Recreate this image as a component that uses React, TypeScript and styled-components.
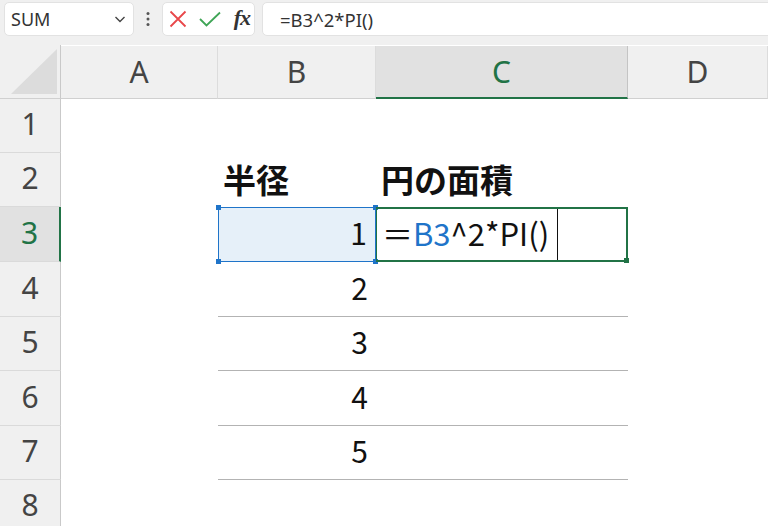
import React from 'react';
import styled, { createGlobalStyle, css } from 'styled-components';

const GlobalStyle = createGlobalStyle`
    html, body {
        margin: 0;
        padding: 0;
        background: #ffffff;
        overflow: hidden;
    }
    body {
        font-family: "Noto Sans", "Noto Sans CJK JP", sans-serif;
    }
`;

const CELL_FONT = `"Noto Sans CJK JP", "Noto Sans", sans-serif`;
const UI_FONT = `"Noto Sans", "Liberation Sans", sans-serif`;

const GREEN = '#217346';
const BLUE = '#1f74c9';

const Window = styled.div`
    width: 768px;
    height: 526px;
    display: flex;
    flex-direction: column;
    overflow: hidden;
    background: #ffffff;
`;

// 数式バー
const Toolbar = styled.div`
    height: 45px;
    flex-shrink: 0;
    display: flex;
    align-items: flex-start;
    padding: 2px 0 0 4px;
    box-sizing: border-box;
    background: #f0f0f0;
`;

const Panel = styled.div`
    height: 34px;
    box-sizing: border-box;
    background: #ffffff;
    border: 1px solid #e2e2e2;
    border-radius: 5px;
    display: flex;
    align-items: center;
`;

const NameBox = styled(Panel)`
    width: 130px;
    padding: 0 6px 0 6px;
    justify-content: space-between;
    font-family: ${UI_FONT};
    font-size: 18px;
    color: #333333;
`;

const Dots = styled.div`
    width: 28px;
    height: 34px;
    display: flex;
    align-items: center;
    justify-content: center;
`;

const ButtonGroup = styled(Panel)`
    width: 93px;
    padding: 0 4px 0 6px;
    justify-content: space-between;
`;

const Fx = styled.span`
    font-family: "Liberation Serif", "DejaVu Serif", serif;
    font-style: italic;
    font-weight: bold;
    font-size: 22px;
    color: #333333;
    margin-top: -3px;
    letter-spacing: -1px;
`;

const FormulaBox = styled(Panel)`
    flex: 1;
    margin-left: 7px;
    margin-right: -12px;
    padding-left: 17px;
    font-family: ${UI_FONT};
    font-size: 18.5px;
    color: #333333;
`;

// シート
const Sheet = styled.div`
    display: grid;
    grid-template-columns: 61px 157px 158px 252px 1fr;
    grid-template-rows: 54px 54px 54px 55px 55px 54px 55px 54px 54px;
`;

const Corner = styled.div`
    background: #f0f0f0;
    border-right: 1px solid #c9c9c9;
    border-bottom: 1px solid #d0d0d0;
    box-sizing: border-box;
    display: flex;
    align-items: flex-end;
    justify-content: flex-end;
    padding: 0 3px 4px 0;
`;

const ColHead = styled.div<{ $selected?: boolean }>`
    box-sizing: border-box;
    background: ${(p) => (p.$selected ? '#e1e1e1' : '#f0f0f0')};
    border-right: 1px solid ${(p) => (p.$selected ? '#c4c4c4' : '#dcdcdc')};
    border-bottom: ${(p) => (p.$selected ? `2px solid ${GREEN}` : '1px solid #d0d0d0')};
    margin-top: 1px;
    display: flex;
    align-items: center;
    justify-content: center;
    font-family: ${UI_FONT};
    font-size: 30px;
    color: ${(p) => (p.$selected ? GREEN : '#444444')};
    padding-bottom: ${(p) => (p.$selected ? '0' : '1px')};
`;

const RowHead = styled.div<{ $selected?: boolean }>`
    box-sizing: border-box;
    background: ${(p) => (p.$selected ? '#e1e1e1' : '#f0f0f0')};
    border-right: ${(p) => (p.$selected ? `2px solid ${GREEN}` : '1px solid #c9c9c9')};
    border-bottom: 1px solid #dadada;
    display: flex;
    align-items: center;
    justify-content: center;
    font-family: ${UI_FONT};
    font-size: 30px;
    color: ${(p) => (p.$selected ? GREEN : '#444444')};
    padding-bottom: 4px;
`;

const Cell = styled.div<{ $right?: boolean; $bold?: boolean; $ruled?: boolean }>`
    box-sizing: border-box;
    display: flex;
    align-items: center;
    justify-content: ${(p) => (p.$right ? 'flex-end' : 'flex-start')};
    padding: ${(p) => (p.$right ? '0 8px 5px 0' : '0 0 2px 5px')};
    font-family: ${CELL_FONT};
    font-size: ${(p) => (p.$bold ? '33px' : '30px')};
    font-weight: ${(p) => (p.$bold ? 700 : 400)};
    color: #111111;
    border-bottom: 1px solid ${(p) => (p.$ruled ? '#b3b3b3' : 'transparent')};
    white-space: nowrap;
`;

const selectedBox = css`
    position: relative;
    box-sizing: border-box;
    display: flex;
    align-items: center;
    font-family: ${CELL_FONT};
    font-size: 31px;
    color: #111111;
`;

const RefCell = styled.div`
    ${selectedBox};
    justify-content: flex-end;
    padding: 0 8px 5px 0;
    font-size: 30px;
    background: #e6f0f9;
    border: 1px solid ${BLUE};
`;

const EditCell = styled.div`
    ${selectedBox};
    padding: 0 0 4px 5px;
    border: 2px solid ${GREEN};
    border-left-width: 1px;
`;

const Handle = styled.span<{ $color: string; $v: 'top' | 'bottom'; $h: 'left' | 'right' }>`
    position: absolute;
    width: 5px;
    height: 5px;
    background: ${(p) => p.$color};
    ${(p) => p.$v}: -3px;
    ${(p) => p.$h}: -3px;
`;

const Ref = styled.span`
    color: ${BLUE};
`;

const Caret = styled.span`
    align-self: stretch;
    width: 1px;
    margin: 0 0 -4px 8px;
    background: #111111;
`;

const Chevron = () => (
    <svg width="14" height="14" viewBox="0 0 14 14">
        <path d="M2.5 5 L7 9.5 L11.5 5" fill="none" stroke="#444" strokeWidth="1.4" />
    </svg>
);

const VDots = () => (
    <svg width="4" height="16" viewBox="0 0 4 16">
        <circle cx="2" cy="2.5" r="1.5" fill="#555" />
        <circle cx="2" cy="8" r="1.5" fill="#555" />
        <circle cx="2" cy="13.5" r="1.5" fill="#555" />
    </svg>
);

const Cancel = () => (
    <svg width="18" height="18" viewBox="0 0 18 18">
        <path d="M1.5 1.5 L16.5 16.5 M16.5 1.5 L1.5 16.5" stroke="#e8474a" strokeWidth="1.8" fill="none" />
    </svg>
);

const Enter = () => (
    <svg width="22" height="16" viewBox="0 0 22 16">
        <path d="M1 8 L7.5 14.5 L21 1.5" stroke="#3fa556" strokeWidth="1.8" fill="none" />
    </svg>
);

const CornerMark = () => (
    <svg width="46" height="45" viewBox="0 0 46 45">
        <polygon points="46,0 46,45 0,45" fill="#dcdcdc" />
    </svg>
);

type Row = {
    n: number;
    b?: string;
    c?: string;
    bold?: boolean;
    ruled?: boolean;
    active?: boolean;
};

const rows: Row[] = [
    { n: 1 },
    { n: 2, b: '半径', c: '円の面積', bold: true },
    { n: 3, b: '1', active: true },
    { n: 4, b: '2', ruled: true },
    { n: 5, b: '3', ruled: true },
    { n: 6, b: '4', ruled: true },
    { n: 7, b: '5', ruled: true },
    { n: 8 },
];

const columns = ['A', 'B', 'C', 'D'];

const App: React.FC = () => {
    return (
        <>
            <GlobalStyle />
            <Window>
                <Toolbar>
                    <NameBox>
                        <span>SUM</span>
                        <Chevron />
                    </NameBox>
                    <Dots>
                        <VDots />
                    </Dots>
                    <ButtonGroup>
                        <Cancel />
                        <Enter />
                        <Fx>fx</Fx>
                    </ButtonGroup>
                    <FormulaBox>=B3^2*PI()</FormulaBox>
                </Toolbar>
                <Sheet>
                    <Corner>
                        <CornerMark />
                    </Corner>
                    {columns.map((col) => (
                        <ColHead key={col} $selected={col === 'C'}>
                            {col}
                        </ColHead>
                    ))}
                    {rows.map((row) => (
                        <React.Fragment key={row.n}>
                            <RowHead $selected={row.active}>{row.n}</RowHead>
                            <Cell />
                            {row.active ? (
                                <>
                                    <RefCell>
                                        {row.b}
                                        <Handle $color={BLUE} $v="top" $h="left" />
                                        <Handle $color={BLUE} $v="top" $h="right" />
                                        <Handle $color={BLUE} $v="bottom" $h="left" />
                                        <Handle $color={BLUE} $v="bottom" $h="right" />
                                    </RefCell>
                                    <EditCell>
                                        ＝<Ref>B3</Ref>^2*PI()
                                        <Caret />
                                        <Handle $color={GREEN} $v="bottom" $h="right" />
                                    </EditCell>
                                </>
                            ) : (
                                <>
                                    <Cell $right={!row.bold} $bold={row.bold} $ruled={row.ruled}>
                                        {row.b}
                                    </Cell>
                                    <Cell $bold={row.bold} $ruled={row.ruled}>
                                        {row.c}
                                    </Cell>
                                </>
                            )}
                            <Cell />
                        </React.Fragment>
                    ))}
                </Sheet>
            </Window>
        </>
    );
};

export default App;
